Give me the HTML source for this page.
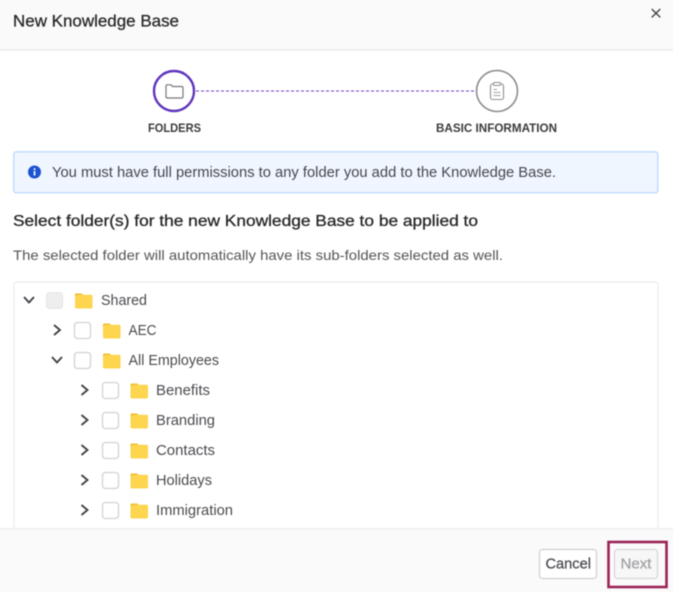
<!DOCTYPE html>
<html><head><meta charset="utf-8"><style>
html,body{margin:0;padding:0;background:#fff;width:678px;height:595px;overflow:hidden}
svg{display:block;filter:blur(.5px)}
text{font-family:"Liberation Sans",sans-serif}
.t{font-size:14.500px;fill:#4b4b50}
</style></head><body>
<svg width="678" height="595" viewBox="0 0 678 595" xmlns="http://www.w3.org/2000/svg">
<defs>
<g id="f"><path d="M0 2.200Q0 .5 1.500 .5H6.500L8 1.800H16Q17.500 1.800 17.500 3.300V14Q17.500 15.500 16 15.500H1.500Q0 15.500 0 14Z" fill="#fdd54f"/><path d="M0 2.200Q0 .5 1.500 .5H6.500L8 1.800H3L0 3Z" fill="#f0b92e"/></g>
<rect id="c" width="16" height="16" rx="3" fill="#fff" stroke="#d2d2d4" stroke-width="1.300"/>
<path id="r" d="M-3 -5L3 0L-3 5" fill="none" stroke="#3f3f46" stroke-width="1.800"/>
<path id="d" d="M-5 -3L0 2.500L5 -3" fill="none" stroke="#3f3f46" stroke-width="1.800"/>
</defs>
<rect x="0" y="0" width="673" height="592" fill="#fff"/>
<rect x="0" y="0" width="673" height="49" fill="#fafafa"/>
<rect x="0" y="49" width="673" height="2" fill="#eeeeee"/>
<text x="13" y="26.500" font-size="16.500" fill="#27272a" stroke="#27272a" stroke-width=".25" textLength="166" lengthAdjust="spacingAndGlyphs">New Knowledge Base</text>
<path d="M651.700 9L660.300 17.400M660.300 9L651.700 17.400" stroke="#3f3f46" stroke-width="1.300"/>

<line x1="196" y1="91" x2="476" y2="91" stroke="#6d3fc4" stroke-width="1" stroke-dasharray="3 2"/>
<circle cx="174" cy="91" r="20" fill="#fff" stroke="#5f35bd" stroke-width="2.400"/>
<path d="M166 86Q166 84.800 167.200 84.800H171L172.500 86.500H181.500Q183 86.500 183 88V96.500Q183 98 181.500 98H167.500Q166 98 166 96.500Z" fill="none" stroke="#77777c" stroke-width="1.200"/>
<circle cx="497" cy="91" r="20.500" fill="#fff" stroke="#8b8b8e" stroke-width="1.600"/>
<rect x="490.500" y="84" width="13" height="15.500" rx="2" fill="none" stroke="#8f8f94" stroke-width="1.100"/>
<rect x="493.500" y="82.500" width="7" height="3" rx="1" fill="#fff" stroke="#8f8f94" stroke-width="1"/>
<path d="M493.500 89.500H497M493.500 92.500H500.500M493.500 95.500H500.500" stroke="#a2a2a6" stroke-width="1"/>
<text x="148" y="132" font-size="12" font-weight="700" fill="#3a3a3e" textLength="53" lengthAdjust="spacingAndGlyphs">FOLDERS</text>
<text x="436" y="132" font-size="12" font-weight="700" fill="#3a3a3e" textLength="121" lengthAdjust="spacingAndGlyphs">BASIC INFORMATION</text>

<rect x="13.800" y="151.800" width="644" height="41" rx="2.500" fill="#f0f6ff" stroke="#bedafd" stroke-width="1.400"/>
<circle cx="34.500" cy="172" r="6.500" fill="#1d52d0"/>
<rect x="33.700" y="171" width="1.700" height="4.500" fill="#fff"/>
<rect x="33.700" y="168.300" width="1.700" height="1.700" fill="#fff"/>
<text x="52" y="177" font-size="14.500" fill="#46464c" textLength="504" lengthAdjust="spacingAndGlyphs">You must have full permissions to any folder you add to the Knowledge Base.</text>

<text x="13" y="226" font-size="16" fill="#27272a" stroke="#27272a" stroke-width=".3" textLength="465" lengthAdjust="spacingAndGlyphs">Select folder(s) for the new Knowledge Base to be applied to</text>
<text x="13" y="260" font-size="14" fill="#55555a" textLength="490" lengthAdjust="spacingAndGlyphs">The selected folder will automatically have its sub-folders selected as well.</text>

<path d="M14 528V285Q14 282 17 282H655Q658 282 658 285V528" fill="none" stroke="#ececee" stroke-width="1.200"/>

<use href="#d" x="29" y="300"/>
<rect x="46.500" y="292.500" width="16" height="16" rx="3" fill="#eeeeee" stroke="#e6e6e6"/>
<use href="#f" x="75" y="293"/>
<text class="t" x="101" y="305" textLength="46" lengthAdjust="spacingAndGlyphs">Shared</text>

<use href="#r" x="57" y="330"/>
<use href="#c" x="74.500" y="322.500"/>
<use href="#f" x="103" y="323"/>
<text class="t" x="128.500" y="335" textLength="28" lengthAdjust="spacingAndGlyphs">AEC</text>

<use href="#d" x="57" y="360"/>
<use href="#c" x="74.500" y="352.500"/>
<use href="#f" x="103" y="353"/>
<text class="t" x="128.500" y="365" textLength="90.500" lengthAdjust="spacingAndGlyphs">All Employees</text>

<use href="#r" x="84.500" y="390"/>
<use href="#c" x="102.500" y="382.500"/>
<use href="#f" x="130.500" y="383"/>
<text class="t" x="156" y="395" textLength="54" lengthAdjust="spacingAndGlyphs">Benefits</text>

<use href="#r" x="84.500" y="420"/>
<use href="#c" x="102.500" y="412.500"/>
<use href="#f" x="130.500" y="413"/>
<text class="t" x="156" y="425" textLength="59" lengthAdjust="spacingAndGlyphs">Branding</text>

<use href="#r" x="84.500" y="450"/>
<use href="#c" x="102.500" y="442.500"/>
<use href="#f" x="130.500" y="443"/>
<text class="t" x="156" y="455" textLength="59" lengthAdjust="spacingAndGlyphs">Contacts</text>

<use href="#r" x="84.500" y="480"/>
<use href="#c" x="102.500" y="472.500"/>
<use href="#f" x="130.500" y="473"/>
<text class="t" x="156" y="485" textLength="56" lengthAdjust="spacingAndGlyphs">Holidays</text>

<use href="#r" x="84.500" y="510"/>
<use href="#c" x="102.500" y="502.500"/>
<use href="#f" x="130.500" y="503"/>
<text class="t" x="156" y="515" textLength="77" lengthAdjust="spacingAndGlyphs">Immigration</text>

<rect x="0" y="528" width="673" height="64" fill="#fafafa"/>
<rect x="0" y="528" width="673" height="1.600" fill="#eeeeee"/>

<rect x="539.500" y="549.500" width="57" height="29" rx="3" fill="#fff" stroke="#d0d0d2" stroke-width="1.200"/>
<text x="545.500" y="568.500" font-size="14.500" fill="#4b4b50" stroke="#4b4b50" stroke-width=".25" textLength="45.500" lengthAdjust="spacingAndGlyphs">Cancel</text>
<rect x="614.500" y="549.500" width="43" height="29" rx="3" fill="#f7f7f7" stroke="#d6d6d8" stroke-width="1.200"/>
<text x="620.500" y="568.500" font-size="14.500" fill="#a2a2a6" stroke="#a2a2a6" stroke-width=".25" textLength="31" lengthAdjust="spacingAndGlyphs">Next</text>
<rect x="608.500" y="542" width="58" height="45" fill="none" stroke="#9b2356" stroke-width="2.600"/>
</svg>
</body></html>
